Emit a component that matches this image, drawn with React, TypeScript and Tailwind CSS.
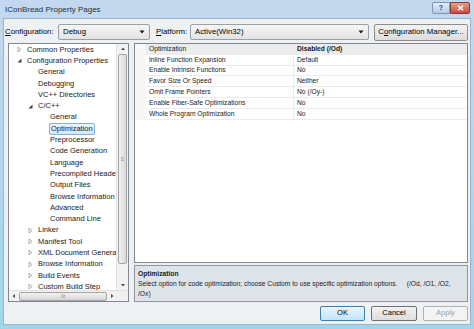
import React from 'react';

type Node = { label: string; level: 0 | 1 | 2; exp?: 'open' | 'closed'; selected?: boolean };

const TREE: Node[] = [
  { label: 'Common Properties', level: 0, exp: 'closed' },
  { label: 'Configuration Properties', level: 0, exp: 'open' },
  { label: 'General', level: 1 },
  { label: 'Debugging', level: 1 },
  { label: 'VC++ Directories', level: 1 },
  { label: 'C/C++', level: 1, exp: 'open' },
  { label: 'General', level: 2 },
  { label: 'Optimization', level: 2, selected: true },
  { label: 'Preprocessor', level: 2 },
  { label: 'Code Generation', level: 2 },
  { label: 'Language', level: 2 },
  { label: 'Precompiled Headers', level: 2 },
  { label: 'Output Files', level: 2 },
  { label: 'Browse Information', level: 2 },
  { label: 'Advanced', level: 2 },
  { label: 'Command Line', level: 2 },
  { label: 'Linker', level: 1, exp: 'closed' },
  { label: 'Manifest Tool', level: 1, exp: 'closed' },
  { label: 'XML Document Generator', level: 1, exp: 'closed' },
  { label: 'Browse Information', level: 1, exp: 'closed' },
  { label: 'Build Events', level: 1, exp: 'closed' },
  { label: 'Custom Build Step', level: 1, exp: 'closed' },
];

const PROPS: [string, string][] = [
  ['Optimization', 'Disabled (/Od)'],
  ['Inline Function Expansion', 'Default'],
  ['Enable Intrinsic Functions', 'No'],
  ['Favor Size Or Speed', 'Neither'],
  ['Omit Frame Pointers', 'No (/Oy-)'],
  ['Enable Fiber-Safe Optimizations', 'No'],
  ['Whole Program Optimization', 'No'],
];

const FONT = { fontFamily: '"Liberation Sans", Arial, sans-serif' };

function Expander({ exp }: { exp?: 'open' | 'closed' }) {
  if (!exp) return <span className="w-[7px] shrink-0" />;
  return (
    <svg width="7" height="7" viewBox="0 0 7 7" className="shrink-0">
      {exp === 'open' ? (
        <path d="M5.5 1.5 L5.5 5.5 L1.5 5.5 Z" fill="#404040" />
      ) : (
        <path d="M2 1 L5 3.5 L2 6 Z" fill="none" stroke="#a6a6a6" strokeWidth="0.9" />
      )}
    </svg>
  );
}

function Arrow({ dir }: { dir: 'up' | 'down' | 'left' | 'right' }) {
  const d = {
    up: 'M1 4 L3 1.5 L5 4 Z',
    down: 'M1 2 L3 4.5 L5 2 Z',
    left: 'M4 1 L1.5 3 L4 5 Z',
    right: 'M2 1 L4.5 3 L2 5 Z',
  }[dir];
  return (
    <svg width="6" height="6" viewBox="0 0 6 6">
      <path d={d} fill="#4d4d4d" />
    </svg>
  );
}

function Combo({ text, className }: { text: string; className: string }) {
  return (
    <div
      className={`h-[16px] flex items-center justify-between pl-[4px] pr-[4px] border border-[#9aa0a8] rounded-[2px] bg-gradient-to-b from-[#f6f6f6] to-[#e3e3e3] text-[7.8px] text-black ${className}`}
    >
      <span>{text}</span>
      <svg width="6" height="4" viewBox="0 0 6 4">
        <path d="M0.5 0.5 L5.5 0.5 L3 3.5 Z" fill="#1a1a1a" />
      </svg>
    </div>
  );
}

function Button({ children, className }: { children: React.ReactNode; className: string }) {
  return (
    <div
      className={`h-[15px] flex items-center justify-center rounded-[2px] border text-[7.5px] ${className}`}
    >
      {children}
    </div>
  );
}

export default function App() {
  return (
    <div
      className="w-[474px] h-[329px] overflow-hidden flex flex-col bg-gradient-to-b from-[#c3d8ee] to-[#9fd6ec] px-[3px] pb-[4px]"
      style={FONT}
    >
      {/* title bar */}
      <div className="h-[18px] flex items-start justify-between">
        <div className="pt-[4px] pl-[2px] text-[8px] text-[#1d2f45]">IConBread Property Pages</div>
        <div className="flex pt-[2px] pr-[1px]">
          <div className="w-[18px] h-[12px] flex items-center justify-center border border-[#7d97b6] rounded-l-[2px] bg-gradient-to-b from-[#e3edf8] to-[#b5cbe4] text-[7px] text-[#2a4b74] font-bold">
            ?
          </div>
          <div className="w-[20px] h-[12px] flex items-center justify-center border border-[#8a3a32] rounded-r-[2px] bg-gradient-to-b from-[#e6a08f] to-[#c8473a]">
            <svg width="7" height="6" viewBox="0 0 7 6">
              <path d="M1 0.8 L6 5.2 M6 0.8 L1 5.2" stroke="#fff" strokeWidth="1.5" />
            </svg>
          </div>
        </div>
      </div>

      {/* body */}
      <div className="flex-1 flex flex-col bg-[#eef1f4] border border-[#9fb3c9] px-[1px]">
        <div className="h-[24px] flex items-center text-[7.8px] text-black pt-[2px]">
          <span className="w-[53px]">
            <span className="underline">C</span>onfiguration:
          </span>
          <Combo text="Debug" className="w-[92px]" />
          <span className="ml-[6px] w-[34px]">
            <span className="underline">P</span>latform:
          </span>
          <Combo text="Active(Win32)" className="w-[179px]" />
          <div className="ml-[5px] w-[94px] h-[17px] flex items-center justify-center border border-[#8c8c8c] rounded-[2px] bg-gradient-to-b from-[#f4f4f4] to-[#dcdcdc]">
            C<span className="underline">o</span>nfiguration Manager...
          </div>
        </div>

        <div className="h-[259px] flex gap-[5px] pl-[3px] pr-[1px]">
          {/* tree */}
          <div className="w-[121px] flex flex-col border border-[#828790] bg-white">
            <div className="flex-1 flex min-h-0">
              <div className="flex-1 overflow-hidden">
                {TREE.map((n, i) => (
                  <div
                    key={i}
                    className={`h-[11.3px] flex items-center whitespace-nowrap text-[7.5px] text-[#1a1a1a] ${
                      n.level === 0 ? 'pl-[7px]' : n.level === 1 ? 'pl-[18px]' : 'pl-[30px]'
                    }`}
                  >
                    <Expander exp={n.exp} />
                    <span
                      className={`ml-[3px] px-[1px] leading-[10px] ${
                        n.selected ? 'border border-[#84acdd] rounded-[2px] bg-gradient-to-b from-[#eef5fd] to-[#d5e6fb]' : ''
                      }`}
                    >
                      {n.label}
                    </span>
                  </div>
                ))}
              </div>
              {/* vertical scrollbar */}
              <div className="w-[12px] flex flex-col items-center bg-[#f2f2f2] border-l border-[#e3e3e3]">
                <div className="h-[10px] flex items-center justify-center">
                  <Arrow dir="up" />
                </div>
                <div className="flex-1 w-full px-[1px] pb-[16px]">
                  <div className="h-full rounded-[2px] border border-[#a3a3a3] bg-gradient-to-r from-[#f1f1f1] to-[#d9d9d9] flex items-center justify-center">
                    <span className="text-[6px] leading-none text-[#808080]">≡</span>
                  </div>
                </div>
                <div className="h-[10px] flex items-center justify-center">
                  <Arrow dir="down" />
                </div>
              </div>
            </div>
            {/* horizontal scrollbar */}
            <div className="h-[11px] flex bg-[#f2f2f2] border-t border-[#e3e3e3]">
              <div className="flex-1 flex items-center">
                <div className="w-[10px] flex justify-center">
                  <Arrow dir="left" />
                </div>
                <div className="w-[88px] h-[9px] rounded-[2px] border border-[#a3a3a3] bg-gradient-to-b from-[#f3f3f3] to-[#d6d6d6] flex items-center justify-center">
                  <span className="text-[5px] leading-none text-[#808080]">III</span>
                </div>
                <div className="flex-1 flex justify-center">
                  <Arrow dir="right" />
                </div>
              </div>
              <div className="w-[12px] bg-[#f0f0f0]" />
            </div>
          </div>

          {/* right side */}
          <div className="flex-1 flex flex-col gap-[2px]">
            <div className="h-[220px] border border-[#828790] bg-white flex flex-col">
              {PROPS.map(([name, val], i) => (
                <div
                  key={i}
                  className={`h-[10.8px] flex text-[6.7px] text-[#1a1a1a] ${i === 0 ? 'bg-[#ececec]' : ''}`}
                >
                  <div className="w-[11px] bg-[#f7f7f7]" />
                  <div className="w-[148px] flex items-center pl-[3px] border-b border-r border-[#ececec]">{name}</div>
                  <div className={`flex-1 flex items-center pl-[3px] border-b border-[#ececec] ${i === 0 ? 'font-bold' : ''}`}>
                    {val}
                  </div>
                </div>
              ))}
            </div>
            <div className="h-[37px] border border-[#8d949c] bg-[#dfe4eb] px-[3px] pt-[3px] text-[6.7px] text-[#1a1a1a] leading-[10px]">
              <div className="font-bold">Optimization</div>
              <div>
                Select option for code optimization; choose Custom to use specific optimization options.&nbsp;&nbsp;&nbsp;&nbsp;&nbsp;(/Od, /O1, /O2, /Ox)
              </div>
            </div>
          </div>
        </div>

        {/* buttons */}
        <div className="flex-1 flex items-center justify-end gap-[6px] pr-[1px]">
          <Button className="w-[45px] border-[#3c7fb1] bg-gradient-to-b from-[#eaf6fd] to-[#bee6fd] text-black">OK</Button>
          <Button className="w-[46px] border-[#707070] bg-gradient-to-b from-[#f2f2f2] to-[#dddddd] text-black">Cancel</Button>
          <Button className="w-[45px] border-[#adb2b5] bg-[#f4f4f4] text-[#a0a0a0]">Apply</Button>
        </div>
      </div>
    </div>
  );
}
